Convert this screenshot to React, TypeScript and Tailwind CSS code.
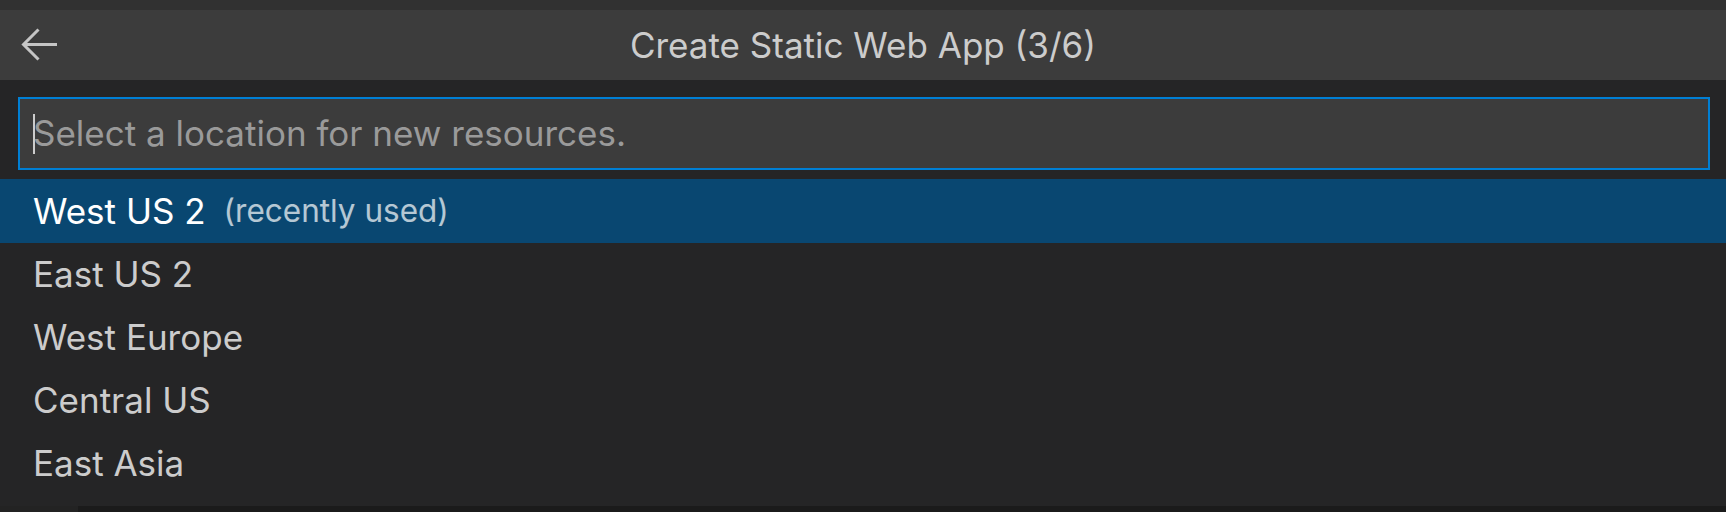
import React from 'react'

const locations = ['West US 2', 'East US 2', 'West Europe', 'Central US', 'East Asia']

function BackArrow() {
  return (
    <svg width="38" height="34" viewBox="0 0 38 34" fill="none" className="text-[#c5c5c5]">
      <path d="M2 16.5H36" stroke="currentColor" strokeWidth="3" />
      <path d="M17.5 1.5L2.5 16.5L17.5 31.5" stroke="currentColor" strokeWidth="3" />
    </svg>
  )
}

export default function App() {
  return (
    <div className="w-[1726px] h-[512px] overflow-hidden bg-[#1e1e1e] flex flex-col font-['Inter','Noto_Sans',sans-serif]">
      {/* window strip above the picker */}
      <div className="h-[10px] bg-[#313131]" />

      <div className="h-[496px] bg-[#252526] flex flex-col">
        {/* Title bar */}
        <div className="h-[70px] bg-[#3c3c3c] grid grid-cols-[1fr_auto_1fr] items-center">
          <div className="pl-[21px] flex items-center">
            <BackArrow />
          </div>
          <div className="text-[35px] text-[#cccccc] leading-none">Create Static Web App (3/6)</div>
          <div />
        </div>

        {/* Input */}
        <div className="pt-[17px] pl-[18px] pr-[16px]">
          <div className="h-[73px] border-2 border-[#007fd4] bg-[#3c3c3c] flex items-center pl-[13px]">
            <div className="w-[2px] h-[40px] bg-[#cccccc]" />
            <span className="text-[35px] text-[#9a9a9a] leading-none -ml-[2px]">
              Select a location for new resources.
            </span>
          </div>
        </div>

        {/* List */}
        <div className="mt-[9px] flex flex-col">
          {locations.map((loc, i) => (
            <div
              key={loc}
              className={
                i === 0
                  ? 'h-[64px] flex items-center pl-[33px] bg-[#094771] text-white'
                  : 'h-[63px] flex items-center pl-[33px] text-[#cccccc]'
              }
            >
              <span className="text-[35px] leading-none">{loc}</span>
              {i === 0 && (
                <span className="text-[31.5px] leading-none ml-[18px] opacity-70">(recently used)</span>
              )}
            </div>
          ))}
        </div>
      </div>

      {/* editor strip below */}
      <div className="h-[6px] flex">
        <div className="w-[78px] bg-[#232323]" />
        <div className="flex-1 bg-[#1b1b1b]" />
      </div>
    </div>
  )
}
